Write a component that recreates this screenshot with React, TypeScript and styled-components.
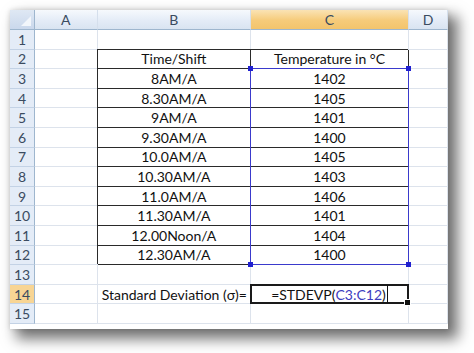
import styled, { createGlobalStyle } from "styled-components";

const GlobalStyle = createGlobalStyle`
  html, body {
    margin: 0;
    padding: 0;
    background: #ffffff;
  }
  body {
    font-family: Lato, "Liberation Sans", sans-serif;
  }
`;

const rows: [string, string][] = [
  ["8AM/A", "1402"],
  ["8.30AM/A", "1405"],
  ["9AM/A", "1401"],
  ["9.30AM/A", "1400"],
  ["10.0AM/A", "1405"],
  ["10.30AM/A", "1403"],
  ["11.0AM/A", "1406"],
  ["11.30AM/A", "1401"],
  ["12.00Noon/A", "1404"],
  ["12.30AM/A", "1400"],
];

const columns = ["A", "B", "C", "D"];

const App = () => {
  const cellsFor = (r: number) => {
    if (r === 2) {
      return [
        <Cell key="a" />,
        <Cell key="b" $boxed>Time/Shift</Cell>,
        <Cell key="c" $boxed>Temperature in °C</Cell>,
        <Cell key="d" />,
      ];
    }
    if (r >= 3 && r <= 12) {
      const [time, temp] = rows[r - 3];
      return [
        <Cell key="a" />,
        <Cell key="b" $boxed>{time}</Cell>,
        <Cell key="c" $boxed>{temp}</Cell>,
        <Cell key="d" />,
      ];
    }
    if (r === 14) {
      return [
        <Cell key="a" />,
        <Cell key="b" $align="right">Standard Deviation (σ)=</Cell>,
        <ActiveCell key="c">
          =STDEVP(<Ref>C3:C12</Ref>)<Caret />
          <FillHandle />
        </ActiveCell>,
        <Cell key="d" />,
      ];
    }
    return columns.map((c) => <Cell key={c} />);
  };

  return (
    <>
      <GlobalStyle />
      <Page>
        <Sheet>
          <Corner />
          {columns.map((c) => (
            <ColHeader key={c} $selected={c === "C"}>
              {c}
            </ColHeader>
          ))}
          {Array.from({ length: 15 }, (_, i) => i + 1).map((r) => [
            <RowHeader key={`h${r}`} $selected={r === 14}>
              {r}
            </RowHeader>,
            ...cellsFor(r).map((cell, j) => (
              <Slot key={`${r}-${j}`} style={{ gridRow: r + 1, gridColumn: j + 2 }}>
                {cell}
              </Slot>
            )),
          ])}
          <Selection>
            <Handle $x="left" $y="top" />
            <Handle $x="right" $y="top" />
            <Handle $x="left" $y="bottom" />
            <Handle $x="right" $y="bottom" />
          </Selection>
        </Sheet>
      </Page>
    </>
  );
};

const Page = styled.div`
  width: 474px;
  height: 353px;
  padding: 10px 0 0 10px;
  box-sizing: border-box;
`;

const Sheet = styled.div`
  position: relative;
  width: 438px;
  height: 319px;
  background: #ffffff;
  display: grid;
  grid-template-columns: 25px 62.7px 153.3px 158px 39px;
  grid-template-rows: 20px repeat(15, 19.6px) 1fr;
  box-shadow: 8px 8px 13px 2px rgba(0, 0, 0, 0.55),
    0 0 5px rgba(0, 0, 0, 0.14);
  font-size: 14px;
  color: #111;
`;

const Corner = styled.div`
  position: relative;
  background: linear-gradient(#dfe8f4, #cad8ec);
  border-right: 1px solid #9eb6ce;
  border-bottom: 1px solid #9eb6ce;
  box-sizing: border-box;
  &::after {
    content: "";
    position: absolute;
    right: 3px;
    bottom: 3px;
    width: 0;
    height: 0;
    border-left: 10px solid transparent;
    border-bottom: 10px solid #f2f6fb;
  }
`;

const ColHeader = styled.div<{ $selected?: boolean }>`
  display: flex;
  align-items: center;
  justify-content: center;
  box-sizing: border-box;
  border-right: 1px solid #d5dfec;
  border-bottom: 1px solid #9eb6ce;
  background: ${(p) =>
    p.$selected
      ? "linear-gradient(#fae3b4, #f6cb7a 55%, #f3c46c)"
      : "linear-gradient(#f6f9fd, #e4ecf7 55%, #d9e4f1)"};
  color: #3a4b60;
  font-size: 14px;
`;

const RowHeader = styled.div<{ $selected?: boolean }>`
  display: flex;
  align-items: center;
  justify-content: center;
  box-sizing: border-box;
  border-right: 1px solid #9eb6ce;
  border-bottom: 1px solid #c3d2e5;
  background: ${(p) => (p.$selected ? "#f8d594" : "#e4ecf7")};
  color: #3a4b60;
  font-size: 14px;
`;

const Slot = styled.div`
  display: flex;
  min-width: 0;
`;

const Cell = styled.div<{ $boxed?: boolean; $align?: "center" | "right" }>`
  flex: 1;
  display: flex;
  align-items: center;
  justify-content: ${(p) => (p.$align === "right" ? "flex-end" : "center")};
  padding: 0 3px;
  box-sizing: border-box;
  white-space: nowrap;
  border-right: 1px solid ${(p) => (p.$boxed ? "#2a2a2a" : "#dde3ec")};
  border-bottom: 1px solid ${(p) => (p.$boxed ? "#2a2a2a" : "#dde3ec")};
  box-shadow: ${(p) => (p.$boxed ? "-1px -1px 0 0 #2a2a2a" : "none")};
`;

const ActiveCell = styled.div`
  position: relative;
  flex: 1;
  display: flex;
  align-items: center;
  justify-content: center;
  box-sizing: border-box;
  white-space: nowrap;
  margin: -1px 0 0 -1px;
  border: 2px solid #1a1a1a;
`;

const Ref = styled.span`
  color: #3c3cc0;
`;

const Caret = styled.span`
  display: inline-block;
  width: 1px;
  height: 18px;
  margin-left: 1px;
  background: #111;
`;

const FillHandle = styled.span`
  position: absolute;
  right: -4px;
  bottom: -4px;
  width: 5px;
  height: 5px;
  background: #111;
  border: 1px solid #fff;
`;

const Selection = styled.div`
  grid-column: 4;
  grid-row: 4 / 14;
  position: relative;
  margin: -1px 0 0 -1px;
  border: 1px solid #3a3acc;
  pointer-events: none;
`;

const Handle = styled.span<{ $x: "left" | "right"; $y: "top" | "bottom" }>`
  position: absolute;
  ${(p) => p.$x}: -3px;
  ${(p) => p.$y}: -3px;
  width: 5px;
  height: 5px;
  background: #2020d0;
`;

export default App;
